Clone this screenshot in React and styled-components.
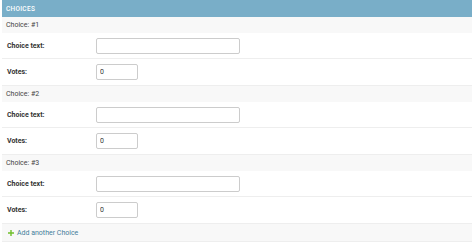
import React from 'react';
import styled, { createGlobalStyle } from 'styled-components';

const GlobalStyle = createGlobalStyle`
  html, body {
    margin: 0;
    padding: 0;
    background: #fff;
    font-family: Roboto, "Liberation Sans", Arial, sans-serif;
  }
`;

const Page = styled.div`
  padding: 0 2px;
  width: 470px;
`;

const Title = styled.h2`
  margin: 0;
  height: 17px;
  display: flex;
  align-items: center;
  padding: 0 4px;
  background: #79aec8;
  color: #fff;
  font-size: 6.5px;
  font-weight: 500;
  letter-spacing: 0.3px;
  text-transform: uppercase;
`;

const GroupHeader = styled.h3`
  margin: 0;
  height: 16px;
  display: flex;
  align-items: center;
  padding: 0 4px;
  background: #f8f8f8;
  color: #444;
  font-size: 7px;
  font-weight: 400;
`;

const Row = styled.div`
  display: flex;
  align-items: center;
  height: ${(p) => p.$h}px;
  border-bottom: 1px solid #eee;
  padding-left: 5px;
`;

const Label = styled.label`
  width: 89px;
  color: #333;
  font-size: 7px;
  font-weight: 700;
`;

const Input = styled.input`
  box-sizing: border-box;
  width: ${(p) => p.$w}px;
  height: 16px;
  margin: 0;
  padding: 0 3px;
  border: 1px solid #ccc;
  border-radius: 2px;
  font-family: Roboto, "Liberation Sans", Arial, sans-serif;
  font-size: 7px;
  color: #333;
  background: #fff;
  outline: none;
`;

const AddRow = styled.div`
  display: flex;
  align-items: center;
  gap: 3px;
  height: 17px;
  padding-left: 6px;
  background: #f8f8f8;
  border-bottom: 1px solid #eee;
`;

const AddLink = styled.a`
  color: #447e9b;
  font-size: 7px;
  text-decoration: none;
`;

const Plus = () => (
  <svg width="6" height="6" viewBox="0 0 6 6">
    <path d="M2.3 0h1.4v2.3H6v1.4H3.7V6H2.3V3.7H0V2.3h2.3z" fill="#70bf2b" />
  </svg>
);

const choices = [1, 2, 3];

export default function App() {
  return (
    <>
      <GlobalStyle />
      <Page>
        <Title>Choices</Title>
        {choices.map((n) => (
          <div key={n}>
            <GroupHeader>Choice: #{n}</GroupHeader>
            <Row $h={25}>
              <Label>Choice text:</Label>
              <Input $w={144} type="text" defaultValue="" />
            </Row>
            <Row $h={26}>
              <Label>Votes:</Label>
              <Input $w={42} type="text" defaultValue="0" />
            </Row>
          </div>
        ))}
        <AddRow>
          <Plus />
          <AddLink href="#">Add another Choice</AddLink>
        </AddRow>
      </Page>
    </>
  );
}
